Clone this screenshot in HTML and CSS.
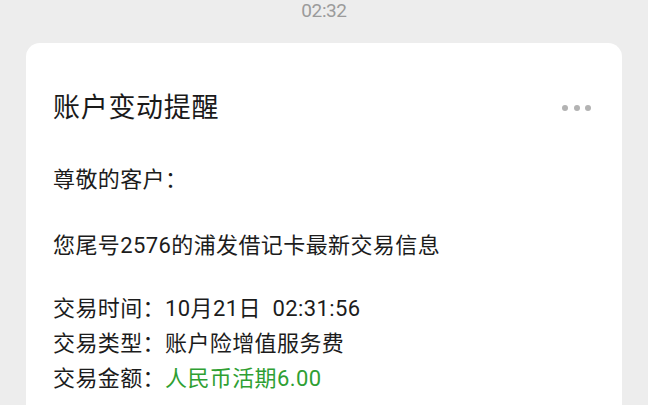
FILE: index.html
```html
<!DOCTYPE html>
<html lang="zh-CN">
<head>
<meta charset="utf-8">
<link rel="stylesheet" href="styles.css">
</head>
<body>
<div class="time">02:32</div>
<div class="card">
  <div class="card-head">
    <div class="title">账户变动提醒</div>
    <div class="more"><span class="dot"></span><span class="dot"></span><span class="dot"></span></div>
  </div>
  <div class="greet">尊敬的客户：</div>
  <div class="intro">您尾号2576的浦发借记卡最新交易信息</div>
  <div class="rows">
    <div class="row"><span class="label">交易时间：</span>10月21日&nbsp;&nbsp;02:31:56</div>
    <div class="row"><span class="label">交易类型：</span>账户险增值服务费</div>
    <div class="row"><span class="label">交易金额：</span><span class="green">人民币活期6.00</span></div>
  </div>
</div>
</body>
</html>
```
FILE: styles.css
```css
html, body {
  margin: 0;
  padding: 0;
}
body {
  background: #ededed;
  width: 648px;
  height: 405px;
  overflow: hidden;
  font-family: Roboto, "Noto Sans CJK SC", sans-serif;
  color: #1c1c1c;
}
.time {
  height: 43px;
  line-height: 22px;
  text-align: center;
  font-family: Roboto, sans-serif;
  font-size: 19px;
  letter-spacing: -0.4px;
  color: #9b9b9b;
}
.card {
  box-sizing: border-box;
  margin: 0 26px;
  background: #ffffff;
  border-radius: 14px 14px 0 0;
  padding: 45px 31px 0 27px;
  height: 362px;
  overflow: hidden;
}
.card-head {
  display: flex;
  align-items: center;
  justify-content: space-between;
  height: 40px;
}
.title {
  font-size: 27px;
  line-height: 40px;
  letter-spacing: 0.7px;
  color: #1a1a1a;
}
.more {
  display: flex;
  gap: 5.5px;
  align-items: center;
}
.dot {
  width: 6px;
  height: 6px;
  border-radius: 50%;
  background: #b3b3b3;
}
.greet, .intro, .row {
  font-size: 22px;
  line-height: 35px;
  letter-spacing: 0.4px;
}
.greet {
  margin-top: 34px;
}
.intro {
  margin-top: 31px;
}
.rows {
  margin-top: 28px;
}
.green {
  color: #2f9f33;
}
```
